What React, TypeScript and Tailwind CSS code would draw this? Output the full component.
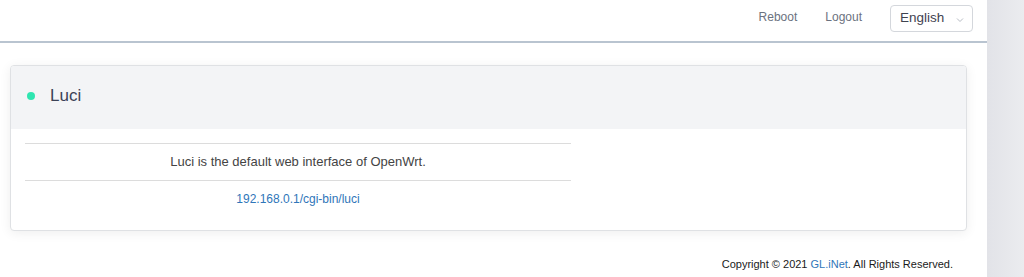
import React from 'react';

const App = () => {
  return (
    <div className="flex h-[277px] w-full bg-white font-['Liberation_Sans',Arial,sans-serif]">
      <div className="w-[987px] shrink-0 bg-white">
        {/* Top bar */}
        <header className="flex h-[43px] items-start justify-end border-b-2 border-[#b9c4d0] pr-[14px] pt-[5px]">
          <button className="mr-[28px] mt-[3px] text-[12px] text-[#6b7280]">Reboot</button>
          <button className="mr-[28px] mt-[3px] text-[12px] text-[#6b7280]">Logout</button>
          <div className="flex h-[27px] w-[83px] items-center justify-between rounded-[4px] border border-[#d4d7dc] pl-[9px] pr-[8px]">
            <span className="text-[13.5px] text-[#3f4350]">English</span>
            <svg width="8" height="6" viewBox="0 0 8 6" className="mt-[2px]">
              <path d="M1 1.5 L4 4.5 L7 1.5" fill="none" stroke="#b7bcc4" strokeWidth="1" />
            </svg>
          </div>
        </header>

        {/* Luci card */}
        <div className="px-[10px] pt-[22px]">
          <div className="w-[957px] overflow-hidden rounded-[4px] border border-[#dfe1e4] bg-white shadow-[0_2px_12px_rgba(0,0,0,0.07)]">
            <div className="flex h-[63px] items-center bg-[#f3f4f6] pb-[4px] pl-[16px]">
              <span className="h-[8px] w-[8px] rounded-full bg-[#2fe5b0]" />
              <span className="ml-[15px] text-[17px] text-[#3b4256]">Luci</span>
            </div>
            <div className="px-[14px] pb-[13px] pt-[14px]">
              <div className="w-[546px] border-t border-[#dcdcdc]">
                <div className="flex h-[37px] items-center justify-center border-b border-[#dcdcdc] text-[13px] text-[#444]">
                  Luci is the default web interface of OpenWrt.
                </div>
                <div className="flex h-[36px] items-center justify-center text-[12px] text-[#2f76b9]">
                  192.168.0.1/cgi-bin/luci
                </div>
              </div>
            </div>
          </div>
        </div>

        {/* Footer */}
        <footer className="flex justify-end pr-[34px] pt-[25px] text-[11px] text-[#1a1a1a]">
          <span>
            Copyright © 2021 <span className="text-[#2f76b9]">GL.iNet</span>. All Rights Reserved.
          </span>
        </footer>
      </div>
      <div className="flex-1 bg-gradient-to-r from-[#e2e3e8] to-[#ebecef]" />
    </div>
  );
};

export default App;
